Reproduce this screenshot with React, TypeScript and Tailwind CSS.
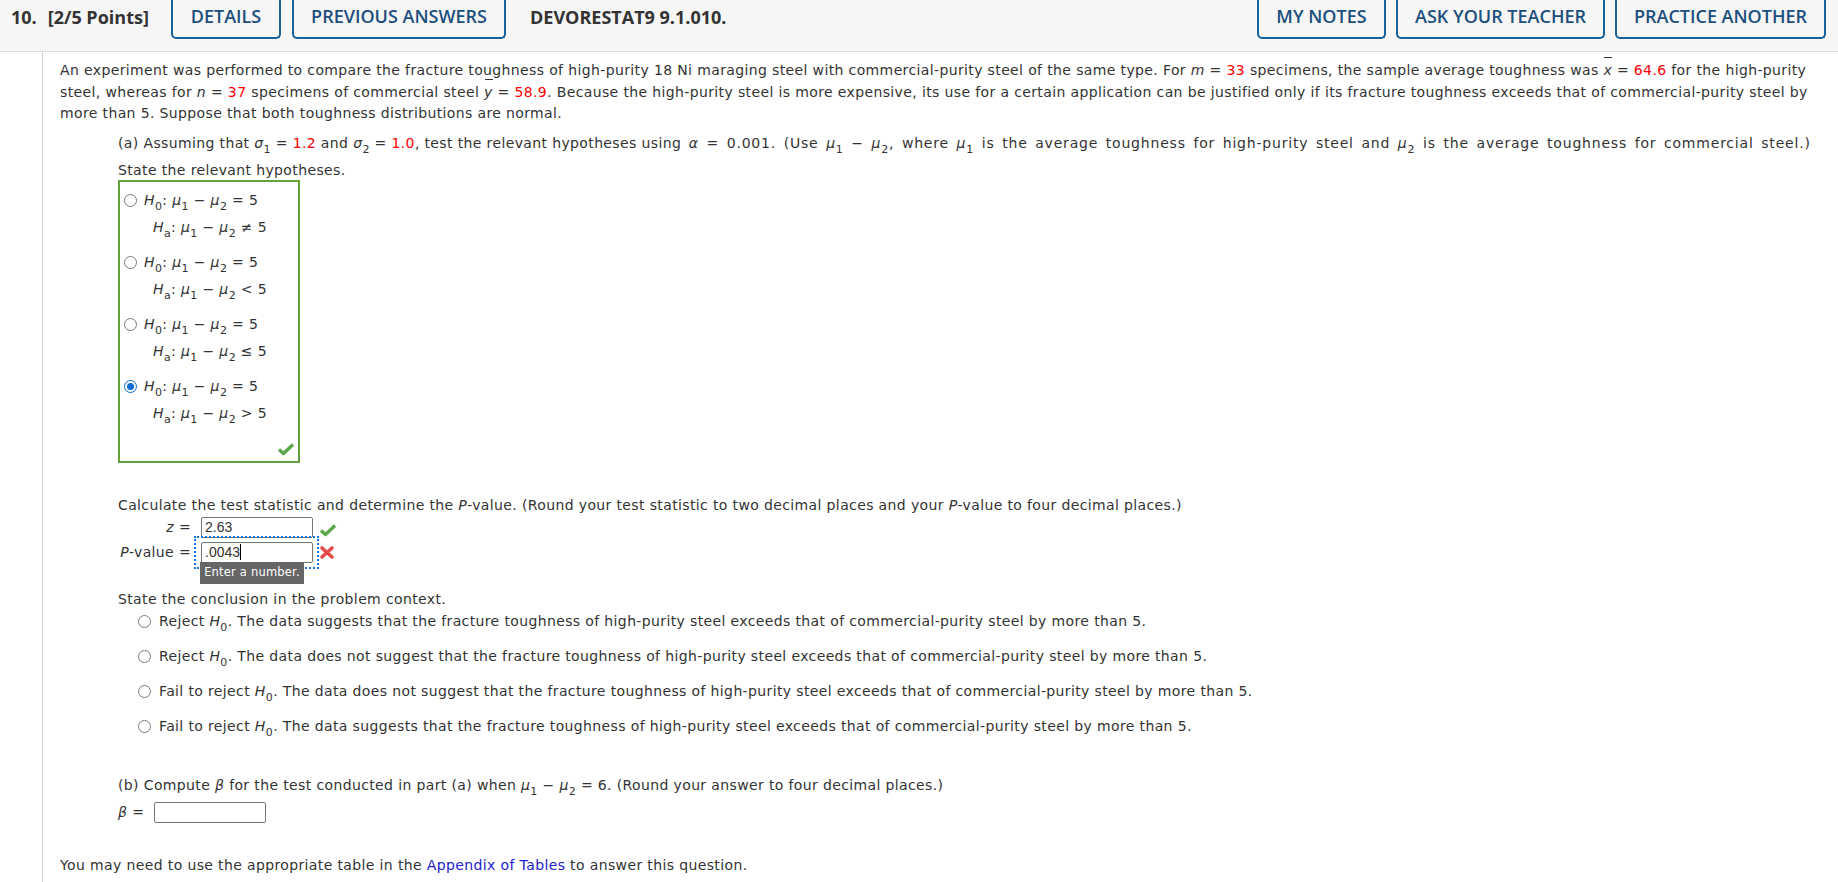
import type { ReactNode } from "react";

const Sub = ({ children }: { children: ReactNode }) => (
  <span className="relative top-[5px] text-[11px] leading-none">{children}</span>
);

const V = ({ children }: { children: ReactNode }) => <span className="italic">{children}</span>;

const Red = ({ children }: { children: ReactNode }) => <span className="text-[#f00]">{children}</span>;

const Bar = ({ children }: { children: ReactNode }) => (
  <span className="relative italic">
    {children}
    <span className="absolute left-[1px] top-[-5px] w-[8px] h-[1px] bg-[#333]" />
  </span>
);

const Radio = ({ checked = false }: { checked?: boolean }) =>
  checked ? (
    <span className="w-[13px] h-[13px] shrink-0 rounded-full border-[1.5px] border-[#0b69d9] bg-white flex items-center justify-center">
      <span className="w-[7px] h-[7px] rounded-full bg-[#0b69d9]" />
    </span>
  ) : (
    <span className="w-[13px] h-[13px] shrink-0 rounded-full border border-[#7a7a7a] bg-white" />
  );

const Check = () => (
  <svg width="18" height="14" viewBox="0 0 18 14">
    <path d="M2 7.5 L6.5 11.5 L16 2.5" fill="none" stroke="#5aa84a" strokeWidth="3.4" strokeLinejoin="round" />
  </svg>
);

const Cross = () => (
  <svg width="16" height="15" viewBox="0 0 16 15">
    <path d="M3 3 L13 12 M13 3 L3 12" fill="none" stroke="#e54a4a" strokeWidth="3.6" strokeLinecap="round" />
  </svg>
);

const Mu = ({ n }: { n: string }) => (
  <>
    <V>μ</V>
    <Sub>{n}</Sub>
  </>
);

const HYPS = ["≠", "<", "≤", ">"];

const CONCLUSIONS = [
  ["Reject", "suggests"],
  ["Reject", "does not suggest"],
  ["Fail to reject", "does not suggest"],
  ["Fail to reject", "suggests"],
];

function HeaderButton({ label, w }: { label: string; w: string }) {
  return (
    <div
      className={`${w} h-[39px] pb-[5px] flex items-center justify-center border-2 border-t-0 border-[#17619d] rounded-b-[5px] text-[#1d4f7e] font-semibold`}
    >
      {label}
    </div>
  );
}

export default function App() {
  return (
    <div className="min-h-screen bg-white text-[#333]">
      {/* question header */}
      <div className="h-[52px] bg-[#f6f6f6] border-b border-[#dcdcdc] flex items-start justify-between pl-[11px] pr-[12px] font-['Open_Sans',sans-serif] text-[18px] whitespace-nowrap">
        <div className="flex items-start">
          <div className="w-[136px] h-[39px] pb-[5px] flex items-center font-bold">
            10.<span className="ml-[11px]">[2/5 Points]</span>
          </div>
          <div className="flex gap-[11px] ml-[24px]">
            <HeaderButton label="DETAILS" w="w-[110px]" />
            <HeaderButton label="PREVIOUS ANSWERS" w="w-[214px]" />
          </div>
          <div className="h-[39px] pb-[5px] ml-[24px] flex items-center font-bold">DEVORESTAT9 9.1.010.</div>
        </div>
        <div className="flex gap-[10px]">
          <HeaderButton label="MY NOTES" w="w-[129px]" />
          <HeaderButton label="ASK YOUR TEACHER" w="w-[209px]" />
          <HeaderButton label="PRACTICE ANOTHER" w="w-[211px]" />
        </div>
      </div>

      <div className="ml-[42px] border-l border-[#cfcfcf] pl-[17px] pt-[8px] pb-[6px] font-['DejaVu_Sans',sans-serif] text-[14px] tracking-[0.37px] whitespace-nowrap">
        <div className="leading-[21.5px]">
          <div>
            An experiment was performed to compare the fracture toughness of high-purity 18 Ni maraging steel with
            commercial-purity steel of the same type. For <V>m</V> = <Red>33</Red> specimens, the sample average
            toughness was <Bar>x</Bar> = <Red>64.6</Red> for the high-purity
          </div>
          <div>
            steel, whereas for <V>n</V> = <Red>37</Red> specimens of commercial steel <Bar>y</Bar> ={" "}
            <Red>58.9</Red>. Because the high-purity steel is more expensive, its use for a certain application can be
            justified only if its fracture toughness exceeds that of commercial-purity steel by
          </div>
          <div>more than 5. Suppose that both toughness distributions are normal.</div>
        </div>

        <div className="ml-[58px]">
          <div className="mt-[7.5px] leading-[22px]">
            (a) Assuming that <V>σ</V>
            <Sub>1</Sub> = <Red>1.2</Red> and <V>σ</V>
            <Sub>2</Sub> = <Red>1.0</Red>, test the relevant hypotheses using
            <span className="tracking-[0.8px] [word-spacing:2.4px]">
              {" "}
              <V>α</V> = 0.001. (Use <Mu n="1" /> − <Mu n="2" />, where <Mu n="1" /> is the average toughness for
              high-purity steel and <Mu n="2" /> is the average toughness for commercial steel.)
            </span>
          </div>
          <div className="mt-[5px] leading-[22px]">State the relevant hypotheses.</div>

          <div className="mt-[-1px] w-[182px] border-2 border-[#63a23c] pl-[4px] pt-[4.5px] pb-[5px]">
            {HYPS.map((op, i) => (
              <div key={op} className={i > 0 ? "mt-[8px]" : ""}>
                <div className="h-[27px] flex items-center gap-[7px]">
                  <Radio checked={i === 3} />
                  <span>
                    <V>H</V>
                    <Sub>0</Sub>: <Mu n="1" /> − <Mu n="2" /> = 5
                  </span>
                </div>
                <div className="h-[27px] flex items-center pl-[29px]">
                  <span>
                    <V>H</V>
                    <Sub>a</Sub>: <Mu n="1" /> − <Mu n="2" /> {op} 5
                  </span>
                </div>
              </div>
            ))}
            <div className="mt-[15px] flex justify-end pr-[3px]">
              <Check />
            </div>
          </div>

          <div className="mt-[31px] leading-[22px]">
            Calculate the test statistic and determine the <V>P</V>-value. (Round your test statistic to two decimal
            places and your <V>P</V>-value to four decimal places.)
          </div>
          <div className="mt-[1px] h-[21px] flex items-center">
            <div className="w-[73px] text-right">
              <V>z</V> =
            </div>
            <div className="ml-[10px] w-[112px] h-[21px] border border-[#767676] rounded-[2px] pl-[3px] flex items-center font-['Liberation_Sans',sans-serif] text-[14px] tracking-normal">
              2.63
            </div>
            <div className="ml-[6px] self-start mt-[6px]">
              <Check />
            </div>
          </div>
          <div className="mt-[4px] h-[21px] flex items-center">
            <div className="w-[73px] text-right">
              <V>P</V>-value =
            </div>
            <div className="relative ml-[10px]">
              <span className="absolute left-[-7px] top-[-6px] w-[125px] h-[33px] border-2 border-dotted border-[#1a73e8]" />
              <div className="relative w-[112px] h-[21px] border border-[#767676] rounded-[2px] bg-white pl-[3px] flex items-center font-['Liberation_Sans',sans-serif] text-[14px] tracking-normal">
                .0043<span className="w-[1px] h-[16px] bg-black" />
              </div>
              <div className="absolute left-[-1px] top-[20px] w-[104px] h-[22px] bg-[#666] text-white text-[11.5px] tracking-[0.2px] flex items-center justify-center">
                Enter a number.
              </div>
            </div>
            <div className="ml-[6px]">
              <Cross />
            </div>
          </div>

          <div className="mt-[25px] leading-[22px]">State the conclusion in the problem context.</div>
          {CONCLUSIONS.map(([verb, sug], i) => (
            <div key={i} className={`${i === 0 ? "mt-[1px]" : "mt-[13px]"} h-[22px] pl-[20px] flex items-center gap-[8px]`}>
              <Radio />
              <span>
                {verb} <V>H</V>
                <Sub>0</Sub>. The data {sug} that the fracture toughness of high-purity steel exceeds that of
                commercial-purity steel by more than 5.
              </span>
            </div>
          ))}

          <div className="mt-[36px] leading-[22px]">
            (b) Compute <V>β</V> for the test conducted in part (a) when <Mu n="1" /> − <Mu n="2" /> = 6. (Round your
            answer to four decimal places.)
          </div>
          <div className="mt-[6px] h-[21px] flex items-center">
            <V>β</V>&nbsp;=
            <div className="ml-[10px] w-[112px] h-[21px] border border-[#767676] rounded-[2px]" />
          </div>
        </div>

        <div className="mt-[31px] leading-[22px]">
          You may need to use the appropriate table in the <span className="text-[#2121cc]">Appendix of Tables</span> to
          answer this question.
        </div>
      </div>
    </div>
  );
}
